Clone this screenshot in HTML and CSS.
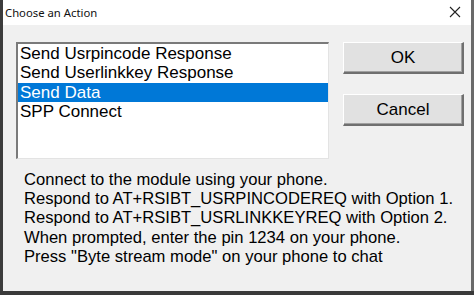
FILE: index.html
```
<!DOCTYPE html>
<html>
<head>
<meta charset="utf-8">
<link rel="stylesheet" href="styles.css">
</head>
<body>
<div class="window">
  <div class="titlebar">
    <span class="title">Choose an Action</span>
    <svg class="close" width="12" height="12" viewBox="0 0 12 12"><path d="M1 1 L11 11 M11 1 L1 11" stroke="#222" stroke-width="1.1" fill="none"/></svg>
  </div>
  <div class="body">
    <div class="top">
      <div class="listbox">
        <div class="item">Send Usrpincode Response</div>
        <div class="item">Send Userlinkkey Response</div>
        <div class="item selected">Send Data</div>
        <div class="item">SPP Connect</div>
      </div>
      <div class="buttons">
        <div class="btn">OK</div>
        <div class="btn">Cancel</div>
      </div>
    </div>
    <div class="info">
      <div>Connect to the module using your phone.</div>
      <div>Respond to AT+RSIBT_USRPINCODEREQ with Option 1.</div>
      <div>Respond to AT+RSIBT_USRLINKKEYREQ with Option 2.</div>
      <div>When prompted, enter the pin 1234 on your phone.</div>
      <div>Press "Byte stream mode" on your phone to chat</div>
    </div>
  </div>
</div>
</body>
</html>
```
FILE: styles.css
```
html, body {
  margin: 0;
  padding: 0;
  width: 474px;
  height: 295px;
  overflow: hidden;
  background: #3a3a3a;
}
.window {
  box-sizing: border-box;
  width: 474px;
  height: 291px;
  border-left: 3px solid #3c3c3c;
  border-right: 3px solid #6a6a6a;
  display: flex;
  flex-direction: column;
  background: #f0f0f0;
}
.titlebar {
  height: 25px;
  background: #ffffff;
  display: flex;
  align-items: center;
  justify-content: space-between;
  padding: 0 10px 0 2px;
  flex: none;
}
.title {
  font-family: "Noto Sans", sans-serif;
  font-size: 11.3px;
  color: #111;
  margin-top: -1px;
}
.close {
  display: block;
  margin-top: -1px;
}
.body {
  flex: 1;
  padding: 17px 7px 0 13px;
  font-family: "Liberation Sans", Arial, sans-serif;
  font-size: 17px;
  color: #000;
}
.top {
  display: flex;
  align-items: flex-start;
}
.listbox {
  box-sizing: border-box;
  width: 314px;
  height: 117px;
  background: #fff;
  border-top: 2px solid #7a7a7a;
  border-left: 2px solid #7a7a7a;
  border-right: 1px solid #e3e3e3;
  border-bottom: 1px solid #e3e3e3;
  padding-top: 0;
}
.item {
  height: 19.3px;
  line-height: 19px;
  padding-left: 2px;
  white-space: nowrap;
}
.item.selected {
  background: #0078d7;
  color: #fff;
}
.buttons {
  margin-left: 14px;
  display: flex;
  flex-direction: column;
  gap: 20px;
}
.btn {
  box-sizing: border-box;
  width: 121px;
  height: 32px;
  background: #e1e1e1;
  border-top: 1px solid #ffffff;
  border-left: 1px solid #ffffff;
  border-right: 2px solid #6f6f6f;
  border-bottom: 2px solid #6f6f6f;
  box-shadow: inset -1px -1px 0 #a0a0a0;
  display: flex;
  align-items: center;
  justify-content: center;
  font-size: 17px;
}
.info {
  margin-top: 11px;
  padding-left: 8px;
  font-size: 16.6px;
  line-height: 19.2px;
  white-space: nowrap;
}
```
